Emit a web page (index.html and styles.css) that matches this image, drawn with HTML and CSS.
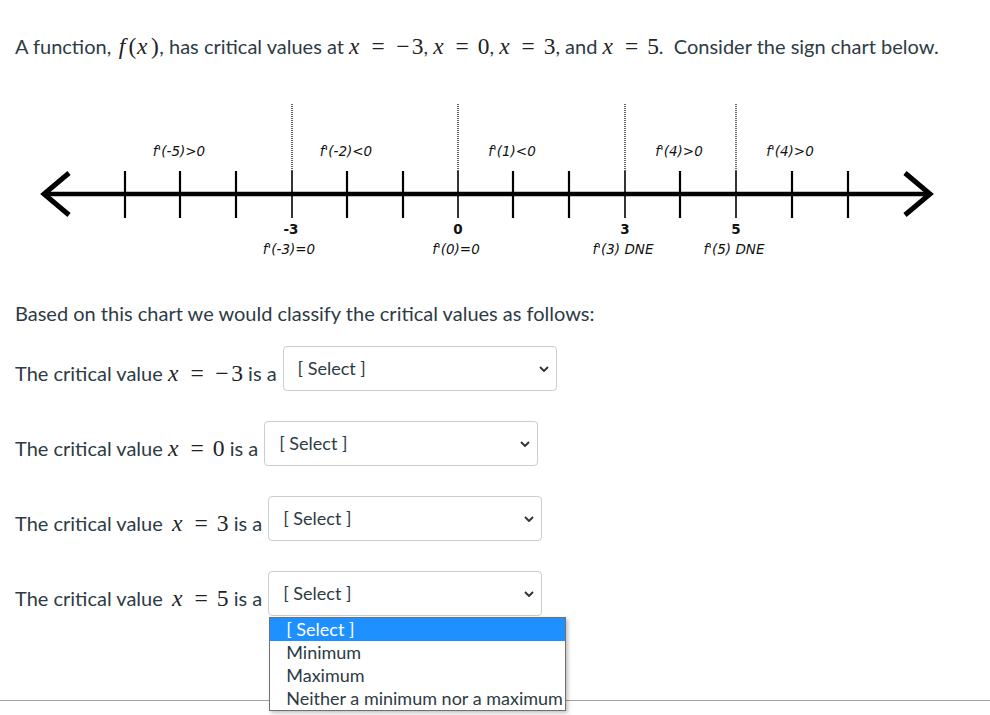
FILE: index.html
```html
<!DOCTYPE html>
<html>
<head>
<meta charset="utf-8">
<link rel="stylesheet" href="styles.css">
</head>
<body>
<div class="content">
  <p class="intro">A function, <span class="m"><span class="mf">f</span><span class="mp">(</span><span class="mi">x</span><span class="mp">)</span></span>, has critical values at <span class="m"><span class="mi">x</span><span class="mo">=</span><span class="neg">−</span>3</span>, <span class="m"><span class="mi">x</span><span class="mo">=</span>0</span>, <span class="m"><span class="mi">x</span><span class="mo">=</span>3</span>, and <span class="m"><span class="mi">x</span><span class="mo">=</span>5</span>.&nbsp; Consider the sign chart below.</p>

  <svg class="chart" width="960" height="180" viewBox="15 95 960 180" xmlns="http://www.w3.org/2000/svg">
    <g class="dots">
      <line x1="292" y1="104" x2="292" y2="171"/>
      <line x1="458" y1="104" x2="458" y2="171"/>
      <line x1="625" y1="104" x2="625" y2="171"/>
      <line x1="736" y1="104" x2="736" y2="171"/>
    </g>
    <line class="axis" x1="44" y1="194" x2="929" y2="194"/>
    <polyline class="arrow" points="69,173 44,194 69,215"/>
    <polyline class="arrow" points="905,173 930,194 905,215"/>
    <g class="ticks">
      <line x1="125" y1="171" x2="125" y2="218"/>
      <line x1="180" y1="171" x2="180" y2="218"/>
      <line x1="236" y1="171" x2="236" y2="218"/>
      <line x1="347" y1="171" x2="347" y2="218"/>
      <line x1="403" y1="171" x2="403" y2="218"/>
      <line x1="513" y1="171" x2="513" y2="218"/>
      <line x1="569" y1="171" x2="569" y2="218"/>
      <line x1="680" y1="171" x2="680" y2="218"/>
      <line x1="792" y1="171" x2="792" y2="218"/>
      <line x1="848" y1="171" x2="848" y2="218"/>
    </g>
    <g class="cticks">
      <line x1="292" y1="171" x2="292" y2="218"/>
      <line x1="458" y1="171" x2="458" y2="218"/>
      <line x1="625" y1="171" x2="625" y2="218"/>
      <line x1="736" y1="171" x2="736" y2="218"/>
    </g>
    <g class="lbl">
      <text x="179" y="156">f'(-5)&gt;0</text>
      <text x="346" y="156">f'(-2)&lt;0</text>
      <text x="512" y="156">f'(1)&lt;0</text>
      <text x="679" y="156">f'(4)&gt;0</text>
      <text x="790" y="156">f'(4)&gt;0</text>
      <text x="289" y="254">f'(-3)=0</text>
      <text x="456" y="254">f'(0)=0</text>
      <text x="623" y="254">f'(3) DNE</text>
      <text x="734" y="254">f'(5) DNE</text>
    </g>
    <g class="num">
      <text x="291" y="234">-3</text>
      <text x="458" y="234">0</text>
      <text x="625" y="234">3</text>
      <text x="736" y="234">5</text>
    </g>
  </svg>

  <p class="lead">Based on this chart we would classify the critical values as follows:</p>

  <div class="row">
    <span class="label">The critical value <span class="m rm"><span class="mi">x</span><span class="mo">=</span><span class="neg">−</span>3</span> is a</span>
    <div class="sel"><span>[ Select ]</span><svg class="chev" width="10" height="6" viewBox="0 0 10 6"><polyline points="1,1 5,5 9,1"/></svg></div>
  </div>

  <div class="row">
    <span class="label">The critical value <span class="m rm"><span class="mi">x</span><span class="mo">=</span>0</span> is a</span>
    <div class="sel"><span>[ Select ]</span><svg class="chev" width="10" height="6" viewBox="0 0 10 6"><polyline points="1,1 5,5 9,1"/></svg></div>
  </div>

  <div class="row">
    <span class="label">The critical value <span class="m rm gap"><span class="mi">x</span><span class="mo">=</span>3</span> is a</span>
    <div class="sel"><span>[ Select ]</span><svg class="chev" width="10" height="6" viewBox="0 0 10 6"><polyline points="1,1 5,5 9,1"/></svg></div>
  </div>

  <div class="row">
    <span class="label">The critical value <span class="m rm gap"><span class="mi">x</span><span class="mo">=</span>5</span> is a</span>
    <div class="sel"><span>[ Select ]</span><svg class="chev" width="10" height="6" viewBox="0 0 10 6"><polyline points="1,1 5,5 9,1"/></svg>
      <ul class="menu">
        <li class="on">[ Select ]</li>
        <li>Minimum</li>
        <li>Maximum</li>
        <li>Neither a minimum nor a maximum</li>
      </ul>
    </div>
  </div>
</div>
<div class="rule"></div>
</body>
</html>
```

FILE: styles.css
```css
html, body {
  margin: 0;
  padding: 0;
  background: #ffffff;
}
body {
  font-family: Lato, "Liberation Sans", sans-serif;
  font-size: 20px;
  color: #2d3b45;
}
.content {
  padding: 33px 15px 0 15px;
}
.intro {
  margin: 0;
  line-height: 27px;
}
.m {
  font-family: "Liberation Serif", "DejaVu Serif", serif;
  font-size: 1.17em;
  color: #222;
}
.rm {
  font-size: 1.18em;
}
.gap {
  margin-left: 4px;
}
.mi {
  display: inline-block;
  width: 0.572em;
  font-style: italic;
}
.mf {
  display: inline-block;
  width: 0.49em;
  font-style: italic;
  text-align: center;
}
.mp {
  display: inline-block;
  width: 0.389em;
  text-align: center;
}
.mo {
  display: inline-block;
  width: 0.778em;
  margin: 0 0.2778em;
  text-align: center;
}
.neg {
  display: inline-block;
  width: 0.778em;
  text-align: center;
}
.chart {
  display: block;
  margin-top: 35px;
}
.chart .axis {
  stroke: #000;
  stroke-width: 4.5;
}
.chart .arrow {
  fill: none;
  stroke: #000;
  stroke-width: 5;
  stroke-linecap: butt;
  stroke-linejoin: miter;
}
.chart .ticks line {
  stroke: #000;
  stroke-width: 2.2;
}
.chart .cticks line {
  stroke: #000;
  stroke-width: 1.6;
}
.chart .dots line {
  stroke: #222;
  stroke-width: 1.4;
  stroke-dasharray: 1 1;
}
.chart .lbl text {
  font-family: "DejaVu Sans", sans-serif;
  font-style: italic;
  font-size: 13.5px;
  fill: #111;
  text-anchor: middle;
}
.chart .num text {
  font-family: "DejaVu Sans", sans-serif;
  font-weight: bold;
  font-size: 13.5px;
  fill: #111;
  text-anchor: middle;
}
.lead {
  margin: 25px 0 0 0;
  line-height: 27px;
}
.row {
  display: flex;
  align-items: center;
  height: 45px;
  margin-top: 30px;
}
.lead + .row {
  margin-top: 19px;
}
.label {
  padding-top: 9px;
  margin-right: 6px;
  white-space: nowrap;
}
.sel {
  position: relative;
  box-sizing: border-box;
  width: 274px;
  height: 45px;
  border: 1px solid #c7cdd1;
  border-radius: 4px;
  background: #fff;
  display: flex;
  align-items: center;
  justify-content: space-between;
  padding: 0 7px 0 14px;
  font-size: 18px;
  color: #2d3b45;
}
.sel > span {
  margin-top: -2px;
}
.chev polyline {
  fill: none;
  stroke: #333;
  stroke-width: 1.9;
}
.menu {
  position: absolute;
  top: 45px;
  left: 0;
  width: 297px;
  box-sizing: border-box;
  margin: 0;
  padding: 0;
  list-style: none;
  background: #fff;
  border: 1px solid #707070;
  box-shadow: 2px 2px 4px rgba(0,0,0,0.25);
  z-index: 5;
}
.menu li {
  height: 23px;
  line-height: 23px;
  padding-left: 16px;
  font-size: 18px;
  color: #2d3b45;
  white-space: nowrap;
}
.menu li.on {
  background: #1e90ff;
  color: #fff;
}
.rule {
  margin-top: 84px;
  margin-bottom: 14px;
  border-top: 1px solid #a3a3a3;
}
```
